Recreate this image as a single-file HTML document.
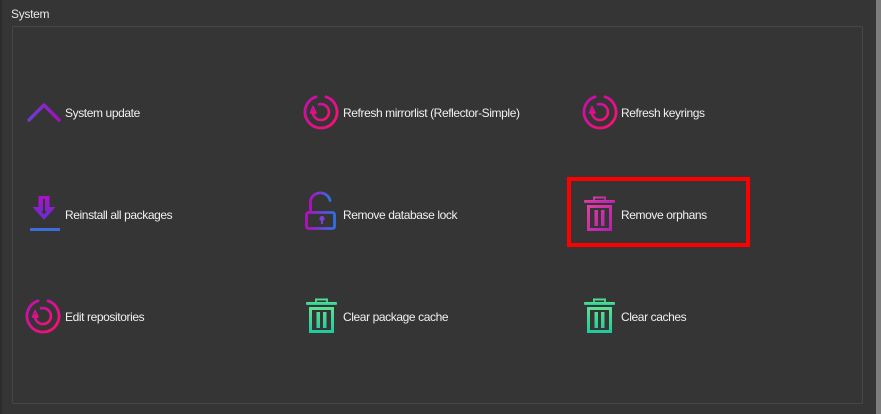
<!DOCTYPE html>
<html><head><meta charset="utf-8">
<style>
html,body{margin:0;padding:0;}
body{width:881px;height:414px;background:#353535;position:relative;overflow:hidden;font-family:"Liberation Sans",sans-serif;}
.rs{position:absolute;right:0;top:0;width:5px;height:414px;background:#7d7d7d;}
.ls{position:absolute;left:0;top:0;width:2px;height:414px;background:#2c2c2c;}
.title{position:absolute;left:11px;top:7px;color:#e8e8e8;font-size:12px;letter-spacing:-0.3px;}
.box{position:absolute;left:12px;top:26px;width:849px;height:376px;border:1px solid #474747;border-radius:2px;}
.t{position:absolute;color:#f0f0f0;font-size:12px;letter-spacing:-0.4px;line-height:14px;}
svg{position:absolute;left:0;top:0;}
.red{position:absolute;left:567px;top:177px;width:175px;height:62px;border:4px solid #f00;}
</style></head><body>
<div class="ls"></div><div class="rs"></div>
<div class="title">System</div>
<div class="box"></div>
<div class="red"></div>
<svg width="881" height="414" viewBox="0 0 881 414">
<defs>
<linearGradient id="pv" x1="0" y1="0" x2="1" y2="0"><stop offset="0" stop-color="#6a3fd0"/><stop offset="1" stop-color="#a40fc0"/></linearGradient>
<linearGradient id="pk" x1="0" y1="0" x2="1" y2="1"><stop offset="0" stop-color="#c010b0"/><stop offset="1" stop-color="#ff1070"/></linearGradient>
<linearGradient id="dl" x1="0" y1="0" x2="0" y2="1"><stop offset="0" stop-color="#b010c8"/><stop offset="1" stop-color="#6030d0"/></linearGradient>
<linearGradient id="lk" x1="0" y1="0" x2="1" y2="0"><stop offset="0" stop-color="#b010c0"/><stop offset="1" stop-color="#3070e0"/></linearGradient>
<linearGradient id="gr" x1="0" y1="0" x2="0" y2="1"><stop offset="0" stop-color="#60e090"/><stop offset="1" stop-color="#20c8a0"/></linearGradient>
<linearGradient id="mg" x1="0" y1="0" x2="1" y2="1"><stop offset="0" stop-color="#e040a0"/><stop offset="1" stop-color="#b020b0"/></linearGradient>
<g id="ref" fill="none" stroke-linecap="round">
<path d="M-5 -15.2 A16 16 0 1 0 5 -15.2" stroke-width="2.8"/>
<path d="M-8 -1 A8 8 0 1 0 -2 -7.7" stroke-width="2.6"/>
<path d="M-10.5 1 L-8 -5.5 L-5 1 Z" stroke-width="1.5" stroke-linejoin="round"/>
</g>
<g id="trash">
<rect x="0" y="4" width="31" height="3" rx="1"/>
<path d="M9 0.5 H22 V4 H20 V2.5 H11 V4 H9 Z"/>
<path d="M3 9 H28 V35 H3 Z M6 12 V32 H25 V12 Z M10.5 14 H14 V30 H10.5 Z M17 14 H20.5 V30 H17 Z" fill-rule="evenodd"/>
</g>
</defs>
<path d="M29 120 L44 105 L59 120" fill="none" stroke="url(#pv)" stroke-width="3.4" stroke-linecap="round" stroke-linejoin="round"/>
<g transform="translate(321,112)" stroke="url(#pk)" fill="url(#pk)"><use href="#ref"/></g>
<g transform="translate(600,112)" stroke="url(#pk)" fill="url(#pk)"><use href="#ref"/></g>
<g transform="translate(43,316)" stroke="url(#pk)" fill="url(#pk)"><use href="#ref"/></g>
<path d="M38.5 196 H49.5 V207 H55.5 L44 220 L32.5 207 H38.5 Z" fill="url(#dl)"/>
<path d="M43 199 V211 H41.2 L44 214.5 L46.8 211 H45 V199 Z" fill="#333"/>
<rect x="30" y="228" width="30" height="3" fill="#3c6cd8"/>
<path d="M310.5 212 V204 A8.5 8 0 0 1 330 200.5" fill="none" stroke="url(#lk)" stroke-width="2.8" stroke-linecap="round"/>
<rect x="306.5" y="212.5" width="28" height="16" rx="2" fill="none" stroke="url(#lk)" stroke-width="2.8"/>
<circle cx="322" cy="218.5" r="2.6" fill="#7a40d0"/><rect x="321" y="219" width="2" height="5" fill="#7a40d0"/>
<g transform="translate(584,196)" fill="url(#mg)"><use href="#trash"/></g>
<g transform="translate(306,298)" fill="url(#gr)"><use href="#trash"/></g>
<g transform="translate(584,298)" fill="url(#gr)"><use href="#trash"/></g>
</svg>
<div class="t" style="left:65px;top:106px">System update</div>
<div class="t" style="left:343px;top:106px">Refresh mirrorlist (Reflector-Simple)</div>
<div class="t" style="left:621px;top:106px">Refresh keyrings</div>
<div class="t" style="left:65px;top:208px">Reinstall all packages</div>
<div class="t" style="left:343px;top:208px">Remove database lock</div>
<div class="t" style="left:621px;top:208px">Remove orphans</div>
<div class="t" style="left:65px;top:310px">Edit repositories</div>
<div class="t" style="left:343px;top:310px">Clear package cache</div>
<div class="t" style="left:621px;top:310px">Clear caches</div>
</body></html>
